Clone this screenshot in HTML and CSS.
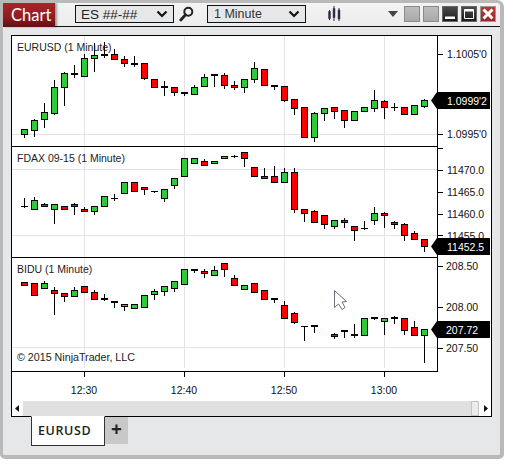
FILE: index.html
```html
<!DOCTYPE html>
<html lang="en">
<head>
<meta charset="utf-8">
<title>Chart</title>
<link rel="stylesheet" href="styles.css">
</head>
<body>
<div class="window">
  <header class="toolbar">
    <div class="chart-tab">Chart</div>
    <div class="select select-instrument"><span>ES ##-##</span>
      <svg class="chev" width="12" height="8" viewBox="0 0 12 8"><path d="M1.5 1.5 6 6l4.500-4.500" fill="none" stroke="#111" stroke-width="2.200"/></svg>
    </div>
    <svg class="icon-search" width="15" height="16" viewBox="0 0 15 16"><circle cx="9.300" cy="5.700" r="4" fill="none" stroke="#222" stroke-width="2"/><path d="M6.500 8.800 1.800 14" stroke="#222" stroke-width="2.800" stroke-linecap="round"/></svg>
    <div class="select select-period"><span>1 Minute</span>
      <svg class="chev" width="12" height="8" viewBox="0 0 12 8"><path d="M1.5 1.500 6 6l4.500-4.500" fill="none" stroke="#111" stroke-width="2.200"/></svg>
    </div>
    <svg class="icon-candles" width="14" height="16" viewBox="0 0 14 16"><path d="M2.500 4v10M7 0v15M12 2v13" stroke="#2a2a44" stroke-width="1"/><path d="M1.500 5.500h2v7h-2zM6 2.500h2v9H6zM11 4h2v9h-2z" fill="#2a2a44" stroke="#4a3050" stroke-width=".5"/></svg>
    <svg class="icon-menu" width="10" height="6" viewBox="0 0 10 6"><path d="M0 0h10L5 6z" fill="#444"/></svg>
    <div class="win-buttons">
      <div class="win-btn win-btn-blank"></div>
      <div class="win-btn win-btn-blank"></div>
      <div class="win-btn win-btn-dark"><svg width="14" height="14" viewBox="0 0 14 14"><path d="M2 9.500h10V12H2z" fill="#fff"/></svg></div>
      <div class="win-btn win-btn-dark"><svg width="14" height="14" viewBox="0 0 14 14"><path d="M2.500 2.500h9v9h-9z" fill="none" stroke="#fff"/><path d="M2.500 3.500h9" stroke="#fff" stroke-width="2"/></svg></div>
      <div class="win-btn win-btn-close"><svg width="14" height="14" viewBox="0 0 14 14"><path d="m2.500 2.500 9 9m0-9-9 9" stroke="#fff" stroke-width="3"/></svg></div>
    </div>
  </header>

  <main class="chart-box">
    <section class="panel">
      <div class="panel-label">EURUSD (1 Minute)</div>
      <svg class="panel-svg panel-tall" data-series="eurusd" viewBox="12 36 479 111" width="479" height="111">
        <g class="grid"><path d="M84.500 36v110M184.500 36v110M284.500 36v110M384.500 36v110M12 134.500h425"/></g>
        <g class="candles"></g>
        <path class="rule" d="M12 146.500h425M437.500 36v111M437 54.500h6M437 94.500h6M437 134.500h6"/>
        <text class="axis-text" x="447" y="58">1.1005'0</text>
        <text class="axis-text" x="447" y="138">1.0995'0</text>
        <polygon class="flag" points="431,100.500 437,92 490,92 490,109 437,109"/>
        <text class="flag-text" x="447" y="104.500">1.0999'2</text>
      </svg>
    </section>
    <section class="panel">
      <div class="panel-label">FDAX 09-15 (1 Minute)</div>
      <svg class="panel-svg panel-tall" data-series="fdax" viewBox="12 147 479 111" width="479" height="111">
        <g class="grid"><path d="M84.500 147v110M184.500 147v110M284.500 147v110M384.500 147v110M12 169.500h425M12 235.500h425"/></g>
        <g class="candles"></g>
        <path class="rule" d="M12 257.500h425M437.500 147v111M437 148.500h6M437 170.500h6M437 192.500h6M437 214.500h6M437 235.500h6"/>
        <text class="axis-text" x="447" y="174">11470.0</text>
        <text class="axis-text" x="447" y="196">11465.0</text>
        <text class="axis-text" x="447" y="218">11460.0</text>
        <text class="axis-text" x="447" y="239.500">11455.0</text>
        <polygon class="flag" points="431,246.500 437,238 490,238 490,255 437,255"/>
        <text class="flag-text" x="447" y="250.500">11452.5</text>
      </svg>
    </section>
    <section class="panel">
      <div class="panel-label">BIDU (1 Minute)</div>
      <svg class="panel-svg panel-last" data-series="bidu" viewBox="12 258 479 114" width="479" height="114">
        <g class="grid"><path d="M84.500 258v110M184.500 258v110M284.500 258v110M384.500 258v110M12 347.500h425"/></g>
        <g class="candles"></g>
        <path class="rule" d="M12 371.500h425M437.500 258v114M437 266.500h6M437 307.500h6M437 348.500h6"/>
        <text class="axis-text" x="446" y="270">208.50</text>
        <text class="axis-text" x="446" y="311">208.00</text>
        <text class="axis-text" x="446" y="352">207.50</text>
        <polygon class="flag" points="431,329.500 437,321 490,321 490,338 437,338"/>
        <text class="flag-text" x="446" y="333.500">207.72</text>
        <path class="cursor" d="M334.500 290.500v17l4-3.500 3.500 5.500 3-2-3-5.500 4.500-.5z"/>
      </svg>
      <div class="copyright">© 2015 NinjaTrader, LLC</div>
    </section>
    <div class="time-axis">
      <div class="time-cell">12:30</div>
      <div class="time-cell">12:40</div>
      <div class="time-cell">12:50</div>
      <div class="time-cell">13:00</div>
    </div>
    <div class="scrollbar">
      <div class="scroll-btn scroll-left"><svg width="5" height="7" viewBox="0 0 5 7"><path d="M4 0v7L0 3.500z" fill="#111"/></svg></div>
      <div class="scroll-track"></div>
      <div class="scroll-thumb"></div>
      <div class="scroll-btn scroll-right"><svg width="5" height="7" viewBox="0 0 5 7"><path d="M1 0v7l4-3.500z" fill="#111"/></svg></div>
    </div>
  </main>

  <nav class="tabs">
    <div class="tab">EURUSD</div>
    <div class="tab-add">+</div>
  </nav>
</div>
<script src="script.js"></script>
</body>
</html>
```

FILE: styles.css
```css
* { box-sizing: border-box; }
html, body { margin: 0; padding: 0; background: #fff; }
body { width: 509px; height: 464px; overflow: hidden; font-family: "Liberation Sans", Arial, sans-serif; color: #111; }

.window {
  width: 504px;
  height: 459px;
  display: flex;
  flex-direction: column;
  background: #e6e7e8;
  border-style: solid;
  border-color: #b9b9b9;
  border-width: 3px 4px 4px 3px;
  border-radius: 0 7px 5px 5px;
  overflow: hidden;
}

.toolbar {
  height: 24px;
  flex: none;
  display: flex;
  align-items: center;
  background: linear-gradient(#f3f3f3, #ececec);
  border-bottom: 1px solid #111;
  padding-bottom: 1px;
}
.chart-tab {
  width: 52px;
  height: 24px;
  margin-bottom: -1px;
  flex: none;
  color: #fff;
  font: 16.5px/24px Lato, sans-serif;
  padding-left: 8px;
  background: linear-gradient(#a8252b, #8f1c20 60%, #5e0f12);
  box-shadow: 2px 0 2px rgba(0,0,0,.35);
}
.select {
  height: 18px;
  width: 99px;
  flex: none;
  display: flex;
  align-items: center;
  justify-content: space-between;
  border: 1px solid #111;
  background: #e6e7e8;
  font-size: 13.5px;
  padding: 0 5px;
  color: #222;
}
.select-instrument { margin-left: 20px; }
.select-period { margin-left: 13px; color: #333; font-size: 12.5px; padding-left: 6px; }
.icon-search { margin-left: 5px; flex: none; }
.icon-candles { margin-left: 21px; flex: none; }
.icon-menu { margin-left: 47px; flex: none; }
.win-buttons { display: flex; gap: 3px; margin-left: 6px; }
.win-btn {
  width: 16px;
  height: 16px;
  display: flex;
  align-items: center;
  justify-content: center;
  border: 1px solid #777;
}
.win-btn-blank { background: linear-gradient(#bdbdbd, #a9a9a9); border-color: #8a8a8a; }
.win-btn-dark { background: linear-gradient(#4a4a4a, #1c1c1c); border-color: #666; }
.win-btn-close { background: linear-gradient(#bb3a3a, #9c2525); border-color: #999; }

.chart-box {
  width: 481px;
  height: 382px;
  flex: none;
  margin: 8px 0 0 8px;
  border: 1px solid #000;
  background: #fff;
  display: flex;
  flex-direction: column;
  position: relative;
}
.panel { position: relative; flex: none; }
.panel-svg { display: block; }
.panel-label, .copyright {
  position: absolute;
  left: 5px;
  font-size: 10.5px;
  line-height: 12px;
  color: #222;
}
.panel-label { top: 5px; }
.copyright { bottom: 9px; font-size: 10.7px; }

.grid path { stroke: #e3e3e3; stroke-width: 1; fill: none; }
.rule { stroke: #000; stroke-width: 1; fill: none; }
.axis-text { font: 10.5px "Liberation Sans", Arial, sans-serif; fill: #111; }
.flag { fill: #000; }
.flag-text { font: 10.5px "Liberation Sans", Arial, sans-serif; fill: #fff; }
.cursor { fill: #fff; stroke: #6b6f78; stroke-width: 1; }
.wick { stroke: #000; stroke-width: 1; }
.body-g { fill: #2fc93a; stroke: #000; stroke-width: 1; }
.body-r { fill: #ff0000; stroke: #000; stroke-width: 1; }
.body-d { fill: #000; }

.time-axis { height: 29px; flex: none; display: flex; padding-left: 22px; }
.time-cell {
  width: 100px;
  text-align: center;
  text-indent: 2px;
  font-size: 10.5px;
  line-height: 12px;
  color: #111;
}
.time-cell::before {
  content: "";
  display: block;
  width: 1px;
  height: 5px;
  margin: 0 auto 7px;
  background: #000;
}

.scrollbar { height: 15px; flex: none; display: flex; background: #e0e0e0; }
.scroll-btn {
  width: 12px;
  display: flex;
  align-items: center;
  justify-content: center;
  background: #fff;
  flex: none;
}
.scroll-left { width: 11px; }
.scroll-track { flex: 1; }
.scroll-thumb { width: 8px; flex: none; background: #ececec; border: 1px solid #c4c4c4; }

.tabs { display: flex; margin-left: 28px; flex: none; }
.tab {
  width: 74px;
  height: 30px;
  margin-top: -1px;
  padding-left: 6px;
  position: relative;
  background: #fff;
  border: 1px solid #333;
  border-top: 1px solid #fff;
  font: 600 12.5px/27px "Open Sans", sans-serif;
  letter-spacing: .6px;
  color: #222;
}
.tab-add {
  width: 23px;
  height: 27px;
  background: #c8c8c8;
  text-align: center;
  font: 700 19px/25px "Open Sans", sans-serif;
  color: #222;
}
```

FILE: script.js
```js
// Each row: type (g up, r down, d doji), body top, body bottom, wick top, wick bottom.
var SERIES = {
  eurusd: [
    ['g',129,134,129,137],['g',120,130,119,136],['g',112,119,103,127],['g',87,113,80,114],
    ['g',73,87,72,105],['d',73,75,65,77],['g',58,76,54,76],['g',55,58,43,71],
    ['d',54,56,42,57],['r',54,59,49,59],['r',59,63,56,66],['d',63,65,56,66],
    ['r',63,78,63,79],['r',79,87,79,87],['d',86,88,81,95],['r',87,92,87,95],
    ['d',92,94,92,95],['g',87,94,85,94],['g',77,86,74,86],['d',74,76,74,86],
    ['r',75,85,73,88],['r',85,87,81,89],['g',79,87,79,92],['g',68,79,62,82],
    ['r',69,85,69,85],['d',85,87,85,89],['r',86,100,86,101],['r',99,108,99,114],
    ['r',107,137,107,137],['g',113,137,112,141],['g',108,113,108,120],['r',107,111,107,118],
    ['r',110,120,110,127],['g',111,120,111,120],['g',107,111,107,111],['g',100,108,90,111],
    ['r',101,107,100,118],['d',107,108,103,110],['r',107,114,107,114],['g',105,114,105,114],
    ['g',100,106,99,107]
  ],
  fdax: [
    ['d',206,207,198,207],['g',200,209,197,209],['r',204,206,203,206],['g',204,209,204,223],
    ['r',206,209,206,209],['r',204,206,203,214],['r',209,211,207,211],['g',206,211,206,214],
    ['g',196,206,196,206],['d',198,199,194,200],['g',182,193,182,193],['r',182,191,182,191],
    ['r',187,189,187,194],['d',191,192,191,192],['g',189,198,189,201],['g',178,185,178,188],
    ['g',158,176,158,176],['g',158,163,158,163],['r',161,165,159,165],['g',161,163,161,163],
    ['g',156,158,156,158],['d',156,157,155,157],['r',152,158,152,166],['r',167,176,167,176],
    ['r',176,178,168,178],['r',176,182,166,182],['g',172,182,168,182],['r',172,209,168,212],
    ['r',209,213,209,221],['r',211,222,210,222],['r',215,224,215,228],['g',220,226,220,228],
    ['r',220,222,218,227],['r',226,230,226,240],['d',228,229,221,229],['g',213,220,207,224],
    ['r',213,215,212,227],['r',222,224,221,228],['r',224,235,223,240],['r',233,239,231,239],
    ['r',239,246,239,251]
  ],
  bidu: [
    ['r',282,285,282,285],['r',283,295,283,295],['g',283,288,281,288],['r',290,293,287,314],
    ['r',293,296,293,301],['g',290,296,287,296],['r',286,292,286,292],['r',292,299,290,299],
    ['d',298,300,294,300],['d',301,303,301,307],['g',304,306,304,310],['g',304,308,304,308],
    ['g',295,307,295,307],['g',291,294,289,299],['g',286,291,286,295],['g',281,288,281,291],
    ['g',269,284,269,284],['d',269,271,269,272],['r',271,273,269,277],['g',270,275,266,275],
    ['r',263,269,263,276],['r',278,285,275,285],['g',285,289,285,289],['r',283,292,283,292],
    ['r',290,299,290,299],['d',298,300,298,302],['r',305,318,301,318],['r',313,322,312,323],
    ['d',326,327,326,340],['d',325,327,325,332],null,['r',334,336,333,338],
    ['d',330,332,330,337],['d',334,336,324,337],['g',318,335,318,335],['d',317,319,317,319],
    ['g',318,321,318,334],['d',317,319,316,323],['r',318,330,318,334],['r',327,335,321,335],
    ['g',329,335,329,362]
  ]
};

var SVG_NS = 'http://www.w3.org/2000/svg';

function el(name, attrs) {
  var node = document.createElementNS(SVG_NS, name);
  Object.keys(attrs).forEach(function (k) { node.setAttribute(k, attrs[k]); });
  return node;
}

document.querySelectorAll('.panel-svg').forEach(function (svg) {
  var group = svg.querySelector('.candles');
  SERIES[svg.dataset.series].forEach(function (c, i) {
    if (!c) return;
    var x = 24 + i * 10;
    group.appendChild(el('line', { 'class': 'wick', x1: x + .5, x2: x + .5, y1: c[3], y2: c[4] + 1 }));
    if (c[0] === 'd') {
      group.appendChild(el('rect', { 'class': 'body-d', x: x - 3, y: c[1], width: 7, height: c[2] - c[1] }));
    } else {
      group.appendChild(el('rect', { 'class': 'body-' + c[0], x: x - 2.5, y: c[1] + .5, width: 6, height: c[2] - c[1] }));
    }
  });
});
```
